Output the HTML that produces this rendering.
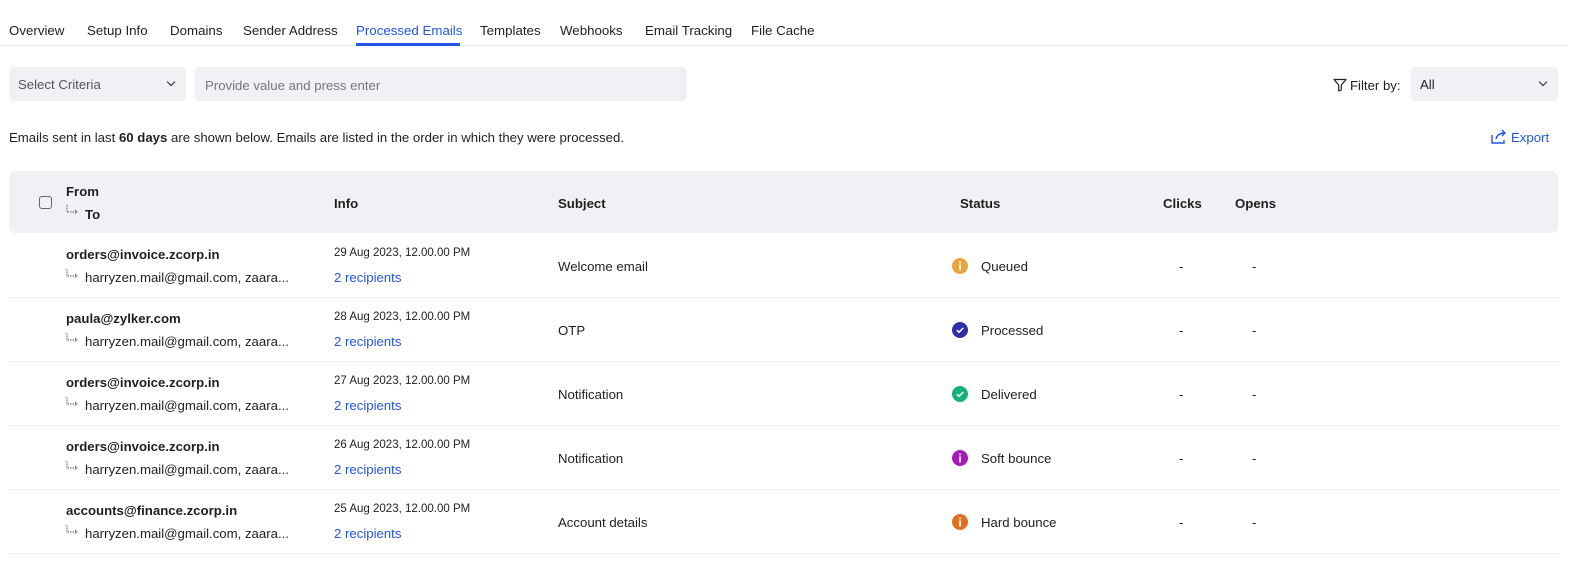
<!DOCTYPE html>
<html><head><meta charset="utf-8"><style>
*{margin:0;padding:0;box-sizing:border-box}
body{width:1590px;height:565px;background:#fff;font-family:"Liberation Sans",sans-serif;color:#1f1f1f;font-size:13.2px;position:relative;overflow:hidden}
.a{position:absolute;white-space:nowrap;line-height:1}
.tab{top:24px;font-size:13.3px}
.box{position:absolute;background:#f0f1f5;border-radius:4px}
.chev{position:absolute;width:6px;height:6px;border-right:1.6px solid #222;border-bottom:1.6px solid #222;transform:rotate(45deg)}
.sep{position:absolute;left:9px;width:1549px;height:1px;background:#eeeff2}
.b{font-weight:bold}
.blue{color:#2355e6}
.ic{position:absolute;width:16px;height:16px;border-radius:50%}
.arr{position:absolute;width:14px;height:10px}
</style></head><body>
<div class="a tab" style="left:9px">Overview</div>
<div class="a tab" style="left:87px">Setup Info</div>
<div class="a tab" style="left:170px">Domains</div>
<div class="a tab" style="left:243px">Sender Address</div>
<div class="a tab" style="left:356px;color:#2355e6">Processed Emails</div>
<div class="a tab" style="left:480px">Templates</div>
<div class="a tab" style="left:560px">Webhooks</div>
<div class="a tab" style="left:645px">Email Tracking</div>
<div class="a tab" style="left:751px">File Cache</div>
<div style="position:absolute;left:0;top:45px;width:1568px;height:1px;background:#e8e9ee"></div>
<div style="position:absolute;left:356px;top:43px;width:104px;height:3px;background:#2355e6"></div>

<div class="box" style="left:9px;top:67px;width:177px;height:34px"></div>
<div class="a" style="left:18px;top:78px;color:#555">Select Criteria</div>
<div class="chev" style="left:168px;top:79px"></div>
<div class="box" style="left:195px;top:67px;width:492px;height:34px"></div>
<div class="a" style="left:205px;top:79px;color:#777">Provide value and press enter</div>

<svg style="position:absolute;left:1333px;top:78px" width="14" height="14" viewBox="0 0 14 14"><path d="M1 1.5h12L8.3 7v5L5.7 13V7z" fill="none" stroke="#222" stroke-width="1.2" stroke-linejoin="round"/></svg>
<div class="a" style="left:1350px;top:79px">Filter by:</div>
<div class="box" style="left:1411px;top:67px;width:147px;height:34px"></div>
<div class="a" style="left:1420px;top:78px">All</div>
<div class="chev" style="left:1540px;top:79px"></div>

<div class="a" style="left:9px;top:131px">Emails sent in last <b>60 days</b> are shown below. Emails are listed in the order in which they were processed.</div>
<svg style="position:absolute;left:1491px;top:129px" width="16" height="15" viewBox="0 0 16 15"><path d="M1 6v8h12v-3" fill="none" stroke="#2355e6" stroke-width="1.4"/><path d="M5 10c1-4 4-6 9-6M11 1l3 3-3 3" fill="none" stroke="#2355e6" stroke-width="1.4"/></svg>
<div class="a blue" style="left:1511px;top:131px">Export</div>

<div class="box" style="left:9px;top:171px;width:1549px;height:62px;border-radius:6px"></div>
<div style="position:absolute;left:39px;top:196px;width:13px;height:13px;border:1.3px solid #666;border-radius:3px"></div>
<div class="a b" style="left:66px;top:185px">From</div>
<svg class="arr" style="left:66px;top:205px" viewBox="0 0 14 10"><path d="M1 0v7h10M9 5l2 2-2 2" fill="none" stroke="#555" stroke-width="1" stroke-dasharray="1.5 1"/></svg>
<div class="a b" style="left:85px;top:208px">To</div>
<div class="a b" style="left:334px;top:197px">Info</div>
<div class="a b" style="left:558px;top:197px">Subject</div>
<div class="a b" style="left:960px;top:197px">Status</div>
<div class="a b" style="left:1163px;top:197px">Clicks</div>
<div class="a b" style="left:1235px;top:197px">Opens</div>

<div id="rows"></div>
<script>
var d=[["orders@invoice.zcorp.in","29","Welcome email","#e8a33d","i","Queued"],
["paula@zylker.com","28","OTP","#2f2fa8","c","Processed"],
["orders@invoice.zcorp.in","27","Notification","#16b07a","c","Delivered"],
["orders@invoice.zcorp.in","26","Notification","#a51ab8","i","Soft bounce"],
["accounts@finance.zcorp.in","25","Account details","#e0701e","i","Hard bounce"]];
var h="";
d.forEach(function(r,i){var t=233+i*64;
h+='<div class="a b" style="left:66px;top:'+(t+15)+'px">'+r[0]+'</div>';
h+='<svg class="arr" style="left:66px;top:'+(t+36)+'px" viewBox="0 0 14 10"><path d="M1 0v7h10M9 5l2 2-2 2" fill="none" stroke="#555" stroke-width="1" stroke-dasharray="1.5 1"/></svg>';
h+='<div class="a" style="left:85px;top:'+(t+38)+'px">harryzen.mail@gmail.com, zaara...</div>';
h+='<div class="a" style="left:334px;top:'+(t+15)+'px;font-size:11.5px">'+r[1]+' Aug 2023, 12.00.00 PM</div>';
h+='<div class="a blue" style="left:334px;top:'+(t+38)+'px">2 recipients</div>';
h+='<div class="a" style="left:558px;top:'+(t+27)+'px">'+r[2]+'</div>';
var ic=r[4]=="i"?'<svg width="16" height="16" viewBox="0 0 16 16"><rect x="7.1" y="3.5" width="1.8" height="1.8" fill="#fff"/><rect x="7.1" y="6.5" width="1.8" height="6" fill="#fff"/></svg>':'<svg width="16" height="16" viewBox="0 0 16 16"><path d="M4.8 8.2l2.2 2.1 4.2-4.3" fill="none" stroke="#fff" stroke-width="1.6"/></svg>';
h+='<div class="ic" style="left:952px;top:'+(t+25)+'px;background:'+r[3]+'">'+ic+'</div>';
h+='<div class="a" style="left:981px;top:'+(t+27)+'px">'+r[5]+'</div>';
h+='<div class="a" style="left:1179px;top:'+(t+27)+'px">-</div>';
h+='<div class="a" style="left:1252px;top:'+(t+27)+'px">-</div>';
h+='<div class="sep" style="top:'+(t+64)+'px"></div>';});
document.getElementById("rows").innerHTML=h;
</script>
</body></html>
